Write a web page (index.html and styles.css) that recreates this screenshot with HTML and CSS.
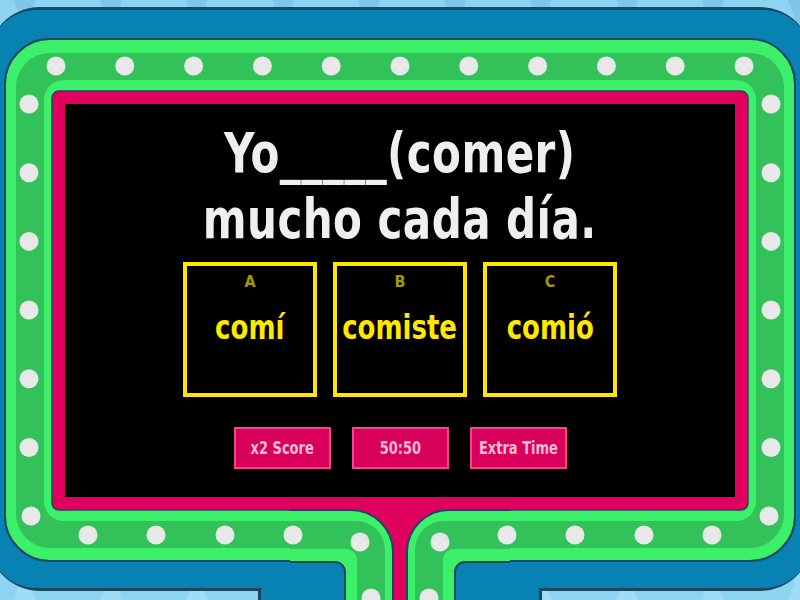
FILE: index.html
```html
<!DOCTYPE html>
<html lang="es">
<head>
<meta charset="utf-8">
<title>Quiz</title>
<link rel="stylesheet" href="styles.css">
</head>
<body>
<div class="stage">
  <svg class="decor" width="800" height="600" viewBox="0 0 800 600" xmlns="http://www.w3.org/2000/svg" aria-hidden="true">
    <defs>
      <pattern id="spikes" x="0" y="0" width="86" height="600" patternUnits="userSpaceOnUse">
        <polygon points="14,0 36,0 25,30" fill="#7fc6e8"/>
        <polygon points="14,600 36,600 25,570" fill="#9fdcf7"/>
      </pattern>
      <g id="lobe">
        <path d="M290 510 H351 A42 42 0 0 1 393 552 V650 H290 Z" fill="#3cf06a"/>
        <path d="M290 521 H356 A29 29 0 0 1 385 550 V650 H290 Z" fill="#33c15a"/>
        <path d="M290 549 H346 A11 11 0 0 1 357 560 V650 H290 Z" fill="#3cf06a"/>
        <path d="M290 562 H335 A10 10 0 0 1 345 572 V650 H290 Z" fill="#0782b2"/>
        <path d="M290 562 H335 A10 10 0 0 1 345 572 V650" fill="none" stroke="#1c4760" stroke-width="2"/>
        <path d="M290 510 H351 A42 42 0 0 1 393 552 V650" fill="none" stroke="#1c4760" stroke-width="2"/>
        <circle cx="360" cy="542" r="9.5" fill="#e8e8e8"/>
        <circle cx="371" cy="598" r="9.5" fill="#e8e8e8"/>
      </g>
    </defs>
    <rect x="0" y="0" width="800" height="600" fill="#8dd3f2"/>
    <rect x="0" y="0" width="800" height="600" fill="url(#spikes)"/>
    <rect x="-12" y="7" width="824" height="584" rx="52" fill="#1c4760"/>
    <rect x="258" y="500" width="284" height="120" fill="#1c4760"/>
    <rect x="-12" y="10" width="824" height="578" rx="49" fill="#0782b2"/>
    <rect x="261" y="500" width="278" height="120" fill="#0782b2"/>
    <rect x="5" y="39" width="790" height="522" rx="45" fill="#3cf06a" stroke="#1c4760" stroke-width="2"/>
    <rect x="16" y="53" width="768" height="495" rx="34" fill="#33c15a"/>
    <rect x="44" y="80" width="712" height="441" rx="20" fill="#3cf06a"/>
    <rect x="52" y="91" width="696" height="419" rx="7" fill="#e0005e" stroke="#1c4760" stroke-width="1.5"/>
    <rect x="340" y="505" width="120" height="120" fill="#e0005e"/>
    <use href="#lobe"/>
    <use href="#lobe" transform="matrix(-1 0 0 1 800 0)"/>
    <g fill="#e8e8e8">
      <circle cx="56" cy="66" r="9.5"/><circle cx="124.8" cy="66" r="9.5"/><circle cx="193.6" cy="66" r="9.5"/>
      <circle cx="262.4" cy="66" r="9.5"/><circle cx="331.2" cy="66" r="9.5"/><circle cx="400" cy="66" r="9.5"/>
      <circle cx="468.8" cy="66" r="9.5"/><circle cx="537.6" cy="66" r="9.5"/><circle cx="606.4" cy="66" r="9.5"/>
      <circle cx="675.2" cy="66" r="9.5"/><circle cx="744" cy="66" r="9.5"/>
      <circle cx="29" cy="104" r="9.5"/><circle cx="29" cy="172.7" r="9.5"/><circle cx="29" cy="241.4" r="9.5"/>
      <circle cx="29" cy="310" r="9.5"/><circle cx="29" cy="378.8" r="9.5"/><circle cx="29" cy="447.5" r="9.5"/>
      <circle cx="31" cy="516" r="9.5"/>
      <circle cx="771" cy="104" r="9.5"/><circle cx="771" cy="172.7" r="9.5"/><circle cx="771" cy="241.4" r="9.5"/>
      <circle cx="771" cy="310" r="9.5"/><circle cx="771" cy="378.8" r="9.5"/><circle cx="771" cy="447.5" r="9.5"/>
      <circle cx="769" cy="516" r="9.5"/>
      <circle cx="88" cy="535" r="9.5"/><circle cx="156" cy="535" r="9.5"/><circle cx="225" cy="535" r="9.5"/>
      <circle cx="293" cy="535" r="9.5"/>
      <circle cx="507" cy="535" r="9.5"/><circle cx="575" cy="535" r="9.5"/><circle cx="644" cy="535" r="9.5"/>
      <circle cx="712" cy="535" r="9.5"/>
    </g>
  </svg>

  <main class="panel">
    <h1 class="question"><span class="narrow">Yo_____(comer)<br>mucho cada día.</span></h1>
    <div class="answers">
      <div class="answer"><span class="letter">A</span><span class="word narrow">comí</span></div>
      <div class="answer"><span class="letter">B</span><span class="word narrow">comiste</span></div>
      <div class="answer"><span class="letter">C</span><span class="word narrow">comió</span></div>
    </div>
    <div class="powerups">
      <button class="power"><span class="narrow">x2 Score</span></button>
      <button class="power"><span class="narrow">50:50</span></button>
      <button class="power"><span class="narrow">Extra Time</span></button>
    </div>
  </main>
</div>
</body>
</html>
```

FILE: styles.css
```css
html, body {
  margin: 0;
  padding: 0;
  background: #8dd3f2;
}

.stage {
  position: relative;
  width: 800px;
  height: 600px;
  overflow: hidden;
  padding: 104px 65px 0;
  box-sizing: border-box;
  font-family: "DejaVu Sans Condensed", "DejaVu Sans", sans-serif;
  font-weight: 700;
}

.decor {
  position: absolute;
  left: 0;
  top: 0;
  z-index: 0;
}

.narrow {
  display: inline-block;
  white-space: nowrap;
  transform: scaleX(0.85);
  transform-origin: center;
}

.panel {
  position: relative;
  z-index: 1;
  width: 670px;
  height: 393px;
  background: #000;
  display: flex;
  flex-direction: column;
  align-items: center;
  padding-top: 16px;
  box-sizing: border-box;
}

.question {
  margin: 0;
  font-size: 55px;
  line-height: 66px;
  font-weight: 700;
  color: #efefef;
  text-align: center;
  letter-spacing: 0.5px;
}

.answers {
  display: flex;
  gap: 16px;
  margin-top: 10px;
}

.answer {
  position: relative;
  width: 134px;
  height: 135px;
  box-sizing: border-box;
  border: 4px solid #ffe500;
  display: flex;
  align-items: center;
  justify-content: center;
}

.letter {
  position: absolute;
  top: 6px;
  left: 0;
  right: 0;
  text-align: center;
  font-size: 16px;
  line-height: 20px;
  color: #a19b00;
}

.word {
  font-size: 34px;
  line-height: 40px;
  color: #ffe800;
  margin-bottom: 6px;
}

.powerups {
  display: flex;
  gap: 21px;
  margin-top: 30px;
}

.power {
  width: 97px;
  height: 42px;
  box-sizing: border-box;
  border: 2px solid #f2488a;
  background: #d9005b;
  color: #f9bcd5;
  font-family: inherit;
  font-weight: 700;
  font-size: 17px;
  padding: 0;
  cursor: pointer;
}
```
